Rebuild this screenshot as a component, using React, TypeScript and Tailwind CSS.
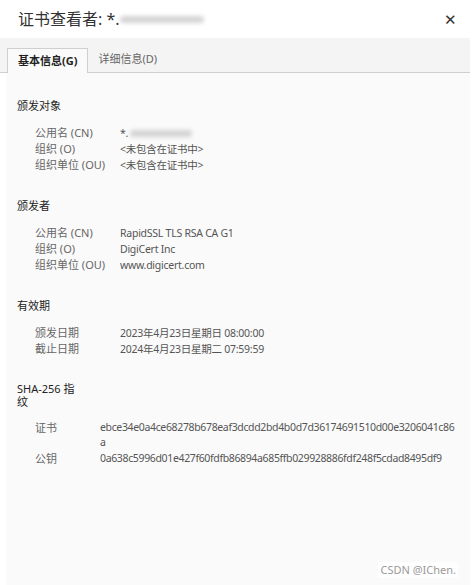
import React from 'react';

const FONT = '"Noto Sans", "Noto Sans CJK SC", sans-serif';

type Row = { label: string; value: React.ReactNode };

const Blur = ({ w }: { w: number }) => (
  <span
    className="inline-block h-[7px] align-middle bg-[#c9c9c9] blur-[2px] opacity-80 rounded-sm"
    style={{ width: w }}
  />
);

const SECTIONS: { title: string; rows: Row[] }[] = [
  {
    title: '颁发对象',
    rows: [
      {
        label: '公用名 (CN)',
        value: (
          <span className="inline-flex items-center gap-[2px]">
            *.<Blur w={62} />
          </span>
        )
      },
      { label: '组织 (O)', value: '<未包含在证书中>' },
      { label: '组织单位 (OU)', value: '<未包含在证书中>' }
    ]
  },
  {
    title: '颁发者',
    rows: [
      { label: '公用名 (CN)', value: 'RapidSSL TLS RSA CA G1' },
      { label: '组织 (O)', value: 'DigiCert Inc' },
      { label: '组织单位 (OU)', value: 'www.digicert.com' }
    ]
  },
  {
    title: '有效期',
    rows: [
      { label: '颁发日期', value: '2023年4月23日星期日 08:00:00' },
      { label: '截止日期', value: '2024年4月23日星期二 07:59:59' }
    ]
  }
];

const HASHES = [
  { label: '证书', value: 'ebce34e0a4ce68278b678eaf3dcdd2bd4b0d7d36174691510d00e3206041c86a' },
  { label: '公钥', value: '0a638c5996d01e427f60fdfb86894a685ffb029928886fdf248f5cdad8495df9' }
];

export default function App() {
  return (
    <div className="w-[474px] h-[585px] bg-white text-[11px] overflow-hidden flex flex-col" style={{ fontFamily: FONT }}>
      {/* title bar */}
      <div className="h-[38px] flex items-center justify-between pl-[18px] pr-[17px]">
        <div className="flex items-center text-[16px] text-[#333] leading-none">
          证书查看者:&nbsp;*.
          <Blur w={84} />
        </div>
        <span className="text-[15px] text-[#333] leading-none">✕</span>
      </div>

      {/* tabs */}
      <div className="h-[35px] bg-[#f4f4f4] border-b border-[#cfcfcf] flex items-end pl-[7px] mr-[4px]">
        <div className="h-[25px] px-[10px] bg-[#fafafa] border border-b-0 border-[#cfcfcf] flex items-center font-bold text-[#222] -mb-px">
          基本信息(G)
        </div>
        <div className="h-[25px] px-[10px] flex items-center text-[#666]">详细信息(D)</div>
      </div>

      {/* content */}
      <div className="flex-1 bg-[#fafafa] mr-[4px] ml-[6px] pl-[11px] pt-[25px] relative leading-[16px]">
        {SECTIONS.map(s => (
          <div key={s.title} className="mb-[25px]">
            <div className="text-[#222] mb-[11px]">{s.title}</div>
            <div className="pl-[18px] flex flex-col">
              {s.rows.map(r => (
                <div key={r.label} className="flex">
                  <div className="w-[85px] shrink-0 text-[#666]">{r.label}</div>
                  <div className="text-[#555] text-[10.5px] tracking-[-0.25px]">{r.value}</div>
                </div>
              ))}
            </div>
          </div>
        ))}

        <div>
          <div className="w-[62px] text-[#222] leading-[13px] mb-[12px]">SHA-256 指纹</div>
          <div className="pl-[18px] flex flex-col leading-[15px]">
            {HASHES.map(h => (
              <div key={h.label} className="flex mb-[1px]">
                <div className="w-[65px] shrink-0 text-[#666]">{h.label}</div>
                <div className="w-[358px] break-all text-[#555] text-[10.5px] tracking-[-0.35px]">{h.value}</div>
              </div>
            ))}
          </div>
        </div>

        <div className="absolute right-[12px] bottom-[7px] text-[#9a9a9a] text-[11px] bg-white/70 px-[2px]">
          CSDN @IChen.
        </div>
      </div>
    </div>
  );
}
